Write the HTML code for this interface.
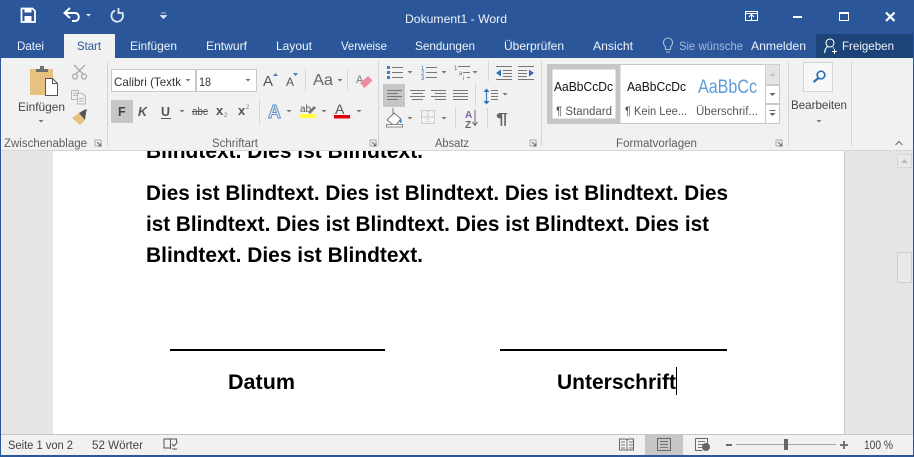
<!DOCTYPE html>
<html lang="de">
<head>
<meta charset="utf-8">
<title>Dokument1 - Word</title>
<style>
html,body{margin:0;padding:0;background:#f1f1f1;}
body{width:914px;height:457px;overflow:hidden;}
svg{display:block;}
text{font-family:"Liberation Sans",sans-serif;}
.t{font-size:12px;fill:#444;}
.w{font-size:12px;fill:#f0f4fa;}
.g{font-size:11.5px;fill:#5f5f5f;}
.d{font-size:21px;font-weight:bold;fill:#000;}
.i{fill:none;stroke:#666;stroke-width:1;}
.l{stroke:#777;stroke-width:1;fill:none;}
.s{stroke:#d4d4d4;stroke-width:1;}
</style>
</head>
<body>
<svg width="914" height="457" viewBox="0 0 914 457" xmlns="http://www.w3.org/2000/svg" shape-rendering="geometricPrecision">
<defs>
<path id="ar" d="M-2.5 0h5L0 2.5z" fill="#777"/>
<g id="lau"><path d="M0 0h6v6h-6z" fill="none" stroke="#aaa"/><path d="M2 2l3.5 3.5M6 3v3h-3" fill="none" stroke="#666"/></g>
</defs>

<!-- document area -->
<rect x="0" y="150" width="914" height="285" fill="#e6e6e6"/>
<rect x="53" y="150" width="791" height="285" fill="#fff"/>
<rect x="844" y="150" width="1" height="285" fill="#c6c6c6"/>
<text class="d" x="146" y="158" textLength="277" lengthAdjust="spacingAndGlyphs">Blindtext. Dies ist Blindtext.</text>
<text class="d" x="146" y="200" textLength="582" lengthAdjust="spacingAndGlyphs">Dies ist Blindtext. Dies ist Blindtext. Dies ist Blindtext. Dies</text>
<text class="d" x="146" y="231" textLength="563" lengthAdjust="spacingAndGlyphs">ist Blindtext. Dies ist Blindtext. Dies ist Blindtext. Dies ist</text>
<text class="d" x="146" y="262" textLength="277" lengthAdjust="spacingAndGlyphs">Blindtext. Dies ist Blindtext.</text>
<rect x="170" y="349" width="215" height="2" fill="#000"/>
<rect x="500" y="349" width="227" height="2" fill="#000"/>
<text class="d" x="228" y="389" textLength="67" lengthAdjust="spacingAndGlyphs">Datum</text>
<text class="d" x="557" y="389" textLength="119" lengthAdjust="spacingAndGlyphs">Unterschrift</text>
<rect x="676" y="367" width="1" height="28" fill="#000"/>

<!-- scrollbar -->
<rect x="897.5" y="154.5" width="14" height="13" fill="#e9e9e9" stroke="#d4d4d4"/>
<path d="M901 163h7l-3.500-4z" fill="#bbb"/>
<rect x="897.5" y="252.5" width="14" height="30" fill="#e9e9e9" stroke="#cfcfcf"/>

<!-- title bar -->
<rect x="0" y="0" width="914" height="58" fill="#2b579a"/>
<!-- save -->
<path d="M21.500 8.500h11l2.500 2.500v11h-13.500z" fill="none" stroke="#fff" stroke-width="1.800"/>
<rect x="24.500" y="8.500" width="7" height="4" fill="#fff"/>
<rect x="24.500" y="16" width="7" height="5.500" fill="#fff"/>
<!-- undo -->
<path d="M66 13h9c5 0 5 8 0 8h-3" fill="none" stroke="#fff" stroke-width="2"/>
<path d="M70 8l-5.500 5 5.500 5" fill="none" stroke="#fff" stroke-width="2"/>
<path d="M86 14h5l-2.500 2.500z" fill="#dfe7f3"/>
<!-- redo -->
<path d="M115 10.500a5.800 5.800 0 1 0 7.500 3" fill="none" stroke="#dfe7f3" stroke-width="1.800"/>
<path d="M118.500 8v5h5" fill="none" stroke="#dfe7f3" stroke-width="1.800"/>
<!-- customize -->
<path d="M161 13h5M160.500 15.500h6l-3 3z" fill="#dfe7f3" stroke="#dfe7f3" stroke-width=".8"/>
<text class="w" x="405" y="23" textLength="102" lengthAdjust="spacingAndGlyphs">Dokument1 - Word</text>
<!-- window controls -->
<rect x="745.500" y="11.500" width="12" height="9" fill="none" stroke="#fff"/>
<path d="M745 13.500h13M751.500 20v-4.500M749 17l2.500-2.500 2.500 2.500" fill="none" stroke="#fff"/>
<rect x="793" y="16" width="9" height="2" fill="#fff"/>
<rect x="839.500" y="12.500" width="9" height="8" fill="none" stroke="#fff"/>
<rect x="839" y="12" width="10" height="2" fill="#fff"/>
<path d="M886 12.500l8.500 8.500M894.500 12.500l-8.500 8.500" stroke="#fff" stroke-width="2.200"/>

<!-- tabs -->
<rect x="64" y="34" width="51" height="25" fill="#f1f1f1"/>
<text class="w" x="17" y="50" textLength="27" lengthAdjust="spacingAndGlyphs">Datei</text>
<text class="t" x="77" y="50" textLength="24" lengthAdjust="spacingAndGlyphs" style="fill:#2b579a">Start</text>
<text class="w" x="130" y="50" textLength="47" lengthAdjust="spacingAndGlyphs">Einfügen</text>
<text class="w" x="206" y="50" textLength="41" lengthAdjust="spacingAndGlyphs">Entwurf</text>
<text class="w" x="276" y="50" textLength="36" lengthAdjust="spacingAndGlyphs">Layout</text>
<text class="w" x="341" y="50" textLength="46" lengthAdjust="spacingAndGlyphs">Verweise</text>
<text class="w" x="415" y="50" textLength="60" lengthAdjust="spacingAndGlyphs">Sendungen</text>
<text class="w" x="504" y="50" textLength="60" lengthAdjust="spacingAndGlyphs">Überprüfen</text>
<text class="w" x="593" y="50" textLength="40" lengthAdjust="spacingAndGlyphs">Ansicht</text>
<path d="M665.500 47c-4-4-1.500-9 2.500-9s6.500 5 2.500 9v2.500h-5zM666 52h4" fill="none" stroke="#a9bcd9" stroke-width="1.100"/>
<text class="w" x="679" y="50" textLength="64" lengthAdjust="spacingAndGlyphs" style="fill:#a5b9d8">Sie wünsche</text>
<text class="w" x="751" y="50" textLength="55" lengthAdjust="spacingAndGlyphs">Anmelden</text>
<rect x="816" y="34" width="97" height="24" fill="#1d4478"/>
<circle cx="830" cy="43" r="4" fill="none" stroke="#fff" stroke-width="1.100"/>
<path d="M824.500 53c.5-4 2-6 3.500-6.500M833 47.500l1 1M834.500 49v5M832 51.500h5" fill="none" stroke="#fff" stroke-width="1.100"/>
<text class="w" x="842" y="50" textLength="52" lengthAdjust="spacingAndGlyphs">Freigeben</text>

<!-- ribbon -->
<rect x="1" y="58" width="912" height="92" fill="#f1f1f1"/>
<rect x="0" y="150" width="914" height="1" fill="#d6d6d6"/>
<line class="s" x1="107.500" y1="61" x2="107.500" y2="146"/>
<line class="s" x1="378.500" y1="61" x2="378.500" y2="146"/>
<line class="s" x1="541.500" y1="61" x2="541.500" y2="146"/>
<line class="s" x1="788.500" y1="61" x2="788.500" y2="146"/>
<line class="s" x1="851.500" y1="61" x2="851.500" y2="146"/>

<!-- clipboard group -->
<rect x="30" y="69" width="23" height="26" fill="#e6c17f"/>
<path d="M36 72v-3h4v-3h4v3h4v3z" fill="#6e6e6e"/>
<path d="M45.500 78.500h7l5 5v12h-12z" fill="#fff" stroke="#555"/>
<path d="M52.500 78.500v5h5" fill="none" stroke="#555"/>
<text class="t" x="18" y="111" textLength="47" lengthAdjust="spacingAndGlyphs">Einfügen</text>
<use href="#ar" x="41" y="120"/>
<!-- scissors -->
<g fill="none" stroke="#a8a8a8" stroke-width="1.300">
<path d="M74 65l9 9M85 65l-9 9"/>
<circle cx="75" cy="76.500" r="2.500"/><circle cx="84" cy="76.500" r="2.500"/>
</g>
<!-- copy -->
<g fill="#f1f1f1" stroke="#b5b5b5">
<path d="M71.500 90.500h7v9h-7z"/><path d="M77.500 93.500h5l3 3v7.500h-8z"/>
<path d="M73 93h4M73 95.500h4M79 98.500h5M79 101h5" fill="none"/>
</g>
<!-- format painter -->
<path d="M72 118l7-5 6 7-5 5z" fill="#e6c17f"/>
<path d="M79 113l5-3 3-1-1 4-1 7z" fill="#555"/>
<text class="g" x="4" y="147" textLength="83" lengthAdjust="spacingAndGlyphs">Zwischenablage</text>
<use href="#lau" x="95" y="140"/>

<!-- font group -->
<rect x="111.500" y="69.500" width="84" height="22" fill="#fff" stroke="#c8c8c8"/>
<rect x="196.500" y="69.500" width="60" height="22" fill="#fff" stroke="#c8c8c8"/>
<text class="t" x="114" y="86" textLength="67" lengthAdjust="spacingAndGlyphs" style="fill:#333">Calibri (Textk</text>
<use href="#ar" x="188" y="79"/>
<text class="t" x="199" y="86" textLength="12" lengthAdjust="spacingAndGlyphs" style="fill:#333">18</text>
<use href="#ar" x="248" y="79"/>
<text x="263" y="86" style="font-size:15px;fill:#555">A</text>
<path d="M273 76h5l-2.500-3z" fill="#4a7ab5"/>
<text x="286" y="86" style="font-size:12px;fill:#555">A</text>
<path d="M293 73h5l-2.500 3z" fill="#4a7ab5"/>
<line class="s" x1="305.500" y1="69" x2="305.500" y2="91"/>
<text x="313" y="85" textLength="20" lengthAdjust="spacingAndGlyphs" style="font-size:16px;fill:#666">Aa</text>
<use href="#ar" x="340" y="79"/>
<line class="s" x1="347.500" y1="69" x2="347.500" y2="91"/>
<text x="356" y="83" style="font-size:11px;fill:#777">A</text>
<path d="M360 83l8-7 4.500 4.500-8 7.500z" fill="#ef8c99"/>

<rect x="111" y="100" width="22" height="23" fill="#c6c6c6"/>
<text x="118" y="116" style="font-size:12.500px;font-weight:bold;fill:#444">F</text>
<text x="138" y="116" style="font-size:12.500px;font-weight:bold;font-style:italic;fill:#555">K</text>
<text x="161" y="116" style="font-size:12.500px;font-weight:bold;fill:#555">U</text>
<rect x="161" y="118" width="10" height="1" fill="#555"/>
<use href="#ar" x="182" y="110"/>
<text x="192" y="115" textLength="16" lengthAdjust="spacingAndGlyphs" style="font-size:11px;fill:#555">abc</text>
<rect x="192" y="111" width="16" height="1" fill="#555"/>
<text x="216" y="115" style="font-size:13px;font-weight:bold;fill:#555">x</text>
<text x="224" y="117" style="font-size:6px;fill:#777">2</text>
<text x="238" y="115" style="font-size:13px;font-weight:bold;fill:#555">x</text>
<text x="246" y="109" style="font-size:6px;fill:#777">2</text>
<line class="s" x1="259.500" y1="100" x2="259.500" y2="124"/>
<text x="268" y="118" style="font-size:18px;font-weight:bold;fill:#dfe9f5;stroke:#5b8ec4;stroke-width:.9">A</text>
<use href="#ar" x="289" y="110"/>
<text x="300" y="112" style="font-size:10px;fill:#555">ab</text>
<path d="M308 112l6-6 2 2-6 6z" fill="#777"/>
<rect x="300" y="114" width="16" height="4" fill="#ffff3c"/>
<use href="#ar" x="324" y="110"/>
<text x="335" y="114" style="font-size:14px;fill:#555">A</text>
<rect x="334" y="115" width="16" height="3.500" fill="#e00012"/>
<use href="#ar" x="359" y="110"/>
<text class="g" x="212" y="147" textLength="46" lengthAdjust="spacingAndGlyphs">Schriftart</text>
<use href="#lau" x="370" y="140"/>

<!-- paragraph group -->
<g fill="#3f7fbd">
<rect x="387" y="66" width="3" height="3"/><rect x="387" y="71" width="3" height="3"/><rect x="387" y="76" width="3" height="3"/>
</g>
<path class="l" d="M392 67.500h11M392 72.500h11M392 77.500h11"/>
<use href="#ar" x="410" y="71"/>
<text x="421" y="70" style="font-size:6px;fill:#3f6fb0">1</text><text x="421" y="75" style="font-size:6px;fill:#3f6fb0">2</text><text x="421" y="80" style="font-size:6px;fill:#3f6fb0">3</text>
<path class="l" d="M426 67.500h11M426 72.500h11M426 77.500h11"/>
<use href="#ar" x="444" y="71"/>
<text x="454" y="70" style="font-size:6px;fill:#3f6fb0">1</text><text x="459" y="75" style="font-size:6px;fill:#3f6fb0">a</text><text x="463" y="80" style="font-size:6px;fill:#3f6fb0">i</text>
<path class="l" d="M458 66.500h12M463 72.500h7M467 77.500h3"/>
<use href="#ar" x="475" y="71"/>
<line class="s" x1="488.500" y1="61" x2="488.500" y2="81"/>
<path class="l" d="M496 66.500h16M503 70.500h9M503 73.500h9M503 76.500h9M496 79.500h16"/>
<path d="M496 73l5-3.500v7z" fill="#2f6fb5"/>
<path class="l" d="M518 66.500h16M518 70.500h9M518 73.500h9M518 76.500h9M518 79.500h16"/>
<path d="M534 73l-5-3.500v7z" fill="#2f6fb5"/>

<rect x="383" y="84" width="22" height="23" fill="#c6c6c6"/>
<path class="l" d="M387 90.500h15M387 93.500h11M387 96.500h15M387 99.500h11"/>
<path class="l" d="M410 90.500h15M412 93.500h11M410 96.500h15M412 99.500h11"/>
<path class="l" d="M431 90.500h15M435 93.500h11M431 96.500h15M435 99.500h11"/>
<path class="l" d="M453 90.500h15M453 93.500h15M453 96.500h15M453 99.500h15"/>
<line class="s" x1="475.500" y1="84" x2="475.500" y2="106"/>
<path d="M486.500 90v13" stroke="#3f7fbd" stroke-width="1.200"/>
<path d="M483.500 92l3-3.500 3 3.500zM483.500 101l3 3.500 3-3.500z" fill="#2f6fb5"/>
<path class="l" d="M491 90.500h7M491 93.500h7M491 96.500h7M491 99.500h7"/>
<use href="#ar" x="505" y="93"/>

<path d="M387 120l7-7 7 6-6 7z" fill="#fff" stroke="#777"/>
<path d="M393 108v7" stroke="#777"/>
<path d="M400 118c2 2 2 4 1 5-1 0-2-2-1-5z" fill="#3f7fbd"/>
<rect x="386.500" y="124.500" width="16" height="2.500" fill="#fff" stroke="#888"/>
<use href="#ar" x="410" y="117"/>
<rect x="421.500" y="110.500" width="13" height="13" fill="none" stroke="#aaa" stroke-dasharray="1 1"/>
<path d="M428 111v12M422 117h12" stroke="#aaa" stroke-dasharray="1 1"/>
<use href="#ar" x="444" y="117"/>
<line class="s" x1="455.500" y1="108" x2="455.500" y2="128"/>
<text x="465" y="118" style="font-size:10px;font-weight:bold;fill:#8064a2">A</text>
<text x="465" y="128" style="font-size:10px;font-weight:bold;fill:#666">Z</text>
<path d="M475 110v15M472.500 122l2.500 3.500 2.500-3.500" fill="none" stroke="#666"/>
<line class="s" x1="487.500" y1="108" x2="487.500" y2="128"/>
<text x="496" y="124" textLength="12" lengthAdjust="spacingAndGlyphs" style="font-size:16px;font-weight:bold;fill:#666">¶</text>
<text class="g" x="435" y="147" textLength="34" lengthAdjust="spacingAndGlyphs">Absatz</text>
<use href="#lau" x="530" y="140"/>

<!-- styles gallery -->
<rect x="547.500" y="64.500" width="218" height="59" fill="#fff" stroke="#c8c8c8"/>
<rect x="550" y="67" width="68" height="54" fill="#fff" stroke="#c6c6c6" stroke-width="5"/>
<text x="554" y="91" textLength="59" lengthAdjust="spacingAndGlyphs" style="font-size:13px;fill:#111">AaBbCcDc</text>
<text x="556" y="115" textLength="56" lengthAdjust="spacingAndGlyphs" style="font-size:11.500px;fill:#555">¶ Standard</text>
<text x="627" y="91" textLength="59" lengthAdjust="spacingAndGlyphs" style="font-size:13px;fill:#111">AaBbCcDc</text>
<text x="625" y="115" textLength="62" lengthAdjust="spacingAndGlyphs" style="font-size:11.500px;fill:#555">¶ Kein Lee...</text>
<text x="698" y="93" textLength="59" lengthAdjust="spacingAndGlyphs" style="font-size:19px;fill:#5b9bd5">AaBbCc</text>
<text x="696" y="115" textLength="62" lengthAdjust="spacingAndGlyphs" style="font-size:11.500px;fill:#555">Überschrif...</text>
<rect x="765.500" y="64.500" width="14" height="20" fill="#e4e4e4" stroke="#d0d0d0"/>
<rect x="765.500" y="85.500" width="14" height="18" fill="#fff" stroke="#c8c8c8"/>
<rect x="765.500" y="104.500" width="14" height="19" fill="#fff" stroke="#c8c8c8"/>
<path d="M769.500 76h6l-3-3.500z" fill="#c4c4c4"/>
<path d="M769.500 93h6l-3 3z" fill="#666"/>
<path d="M769.500 110.500h6" stroke="#666"/>
<path d="M769.500 113h6l-3 3z" fill="#666"/>
<text class="g" x="616" y="147" textLength="81" lengthAdjust="spacingAndGlyphs">Formatvorlagen</text>
<use href="#lau" x="776" y="140"/>

<!-- edit group -->
<rect x="803.500" y="62.500" width="29" height="29" fill="#f7f7f7" stroke="#d4d4d4"/>
<circle cx="821" cy="75" r="3.800" fill="#fff" stroke="#2f6fb5" stroke-width="1.700"/>
<path d="M818.500 78l-5 4" stroke="#2f6fb5" stroke-width="2.200"/>
<text class="t" x="791" y="109" textLength="56" lengthAdjust="spacingAndGlyphs">Bearbeiten</text>
<use href="#ar" x="819" y="120"/>
<path d="M895.500 145l3.500-3.500 3.500 3.500" fill="none" stroke="#777" stroke-width="1.200"/>

<!-- status bar -->
<rect x="0" y="434" width="914" height="21" fill="#f1f1f1"/>
<rect x="0" y="434" width="914" height="1" fill="#c6c6c6"/>
<text class="g" x="8" y="449" textLength="65" lengthAdjust="spacingAndGlyphs" style="fill:#444">Seite 1 von 2</text>
<text class="g" x="92" y="449" textLength="51" lengthAdjust="spacingAndGlyphs" style="fill:#444">52 Wörter</text>
<path d="M170.500 449v-10h-6.500v9h6.500M170.500 439h6v3" fill="none" stroke="#555"/>
<path d="M172 444l2 2 3.500-4M172 449h5" fill="none" stroke="#555"/>
<path d="M619.500 439h6.500l1 1 1-1h5.500v11h-14z" fill="none" stroke="#666"/>
<path class="l" d="M627 440v10M621 442h4M621 445h4M621 448h4M629 442h4M629 445h4M629 448h4" stroke-width=".8"/>
<rect x="645" y="435" width="38" height="20" fill="#c6c6c6"/>
<rect x="657.500" y="438.500" width="13" height="12" fill="none" stroke="#666"/>
<path class="l" d="M660 441.500h8M660 444.500h8M660 447.500h8"/>
<path d="M695.500 438.500h12v6M695.500 438.500v12h7" fill="none" stroke="#666"/>
<path class="l" d="M698 441.500h7M698 444.500h5M698 447.500h4"/>
<circle cx="706" cy="447" r="4" fill="#666"/>
<rect x="726" y="444" width="6" height="2" fill="#666"/>
<rect x="736" y="444" width="100" height="1" fill="#a8a8a8"/>
<rect x="784" y="439" width="4" height="11" fill="#666"/>
<path d="M840 445h8M844 441v8" stroke="#666" stroke-width="1.800"/>
<text x="864" y="449" textLength="29" lengthAdjust="spacingAndGlyphs" style="font-size:12px;fill:#444">100 %</text>

<!-- window edge -->
<rect x="0" y="455" width="914" height="2" fill="#2b579a"/>
<rect x="0" y="0" width="1" height="457" fill="#2b579a"/>
<rect x="913" y="0" width="1" height="457" fill="#2b579a"/>
</svg>
</body>
</html>
